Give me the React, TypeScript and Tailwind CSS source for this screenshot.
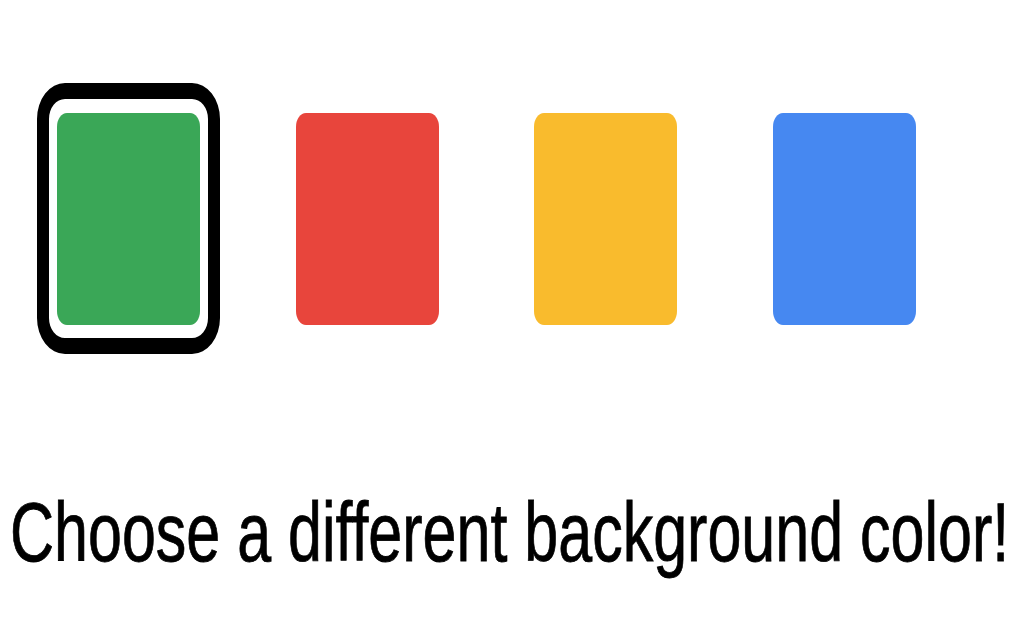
import React, { useState } from "react";

const COLORS = ["#3aa757", "#e8453c", "#f9bb2d", "#4688f1"];

const colorClass: Record<string, string> = {
  "#3aa757": "bg-[#3aa757]",
  "#e8453c": "bg-[#e8453c]",
  "#f9bb2d": "bg-[#f9bb2d]",
  "#4688f1": "bg-[#4688f1]",
};

export default function App() {
  const [current, setCurrent] = useState(COLORS[0]);
  return (
    <div className="min-h-[638px] w-[1020px] bg-white pt-[113px] font-['Liberation_Sans',Arial,sans-serif] text-black">
      <div className="flex gap-[95.5px] pl-[57px]">
        {COLORS.map((c) => (
          <button
            key={c}
            onClick={() => setCurrent(c)}
            className={`relative h-[212px] w-[143px] rounded-[10px/14px] outline-none ${colorClass[c]}`}
          >
            {current === c && (
              <span className="pointer-events-none absolute -bottom-[29px] -left-[20px] -right-[20px] -top-[30px] rounded-[28px/36px] border-x-[12px] border-y-[16px] border-black" />
            )}
          </button>
        ))}
      </div>
      <p className="mt-[166px] origin-top scale-y-[1.37] whitespace-nowrap pl-[10px] text-[61px] leading-none [-webkit-text-stroke:0.6px_black]">
        Choose a different background color!
      </p>
    </div>
  );
}
